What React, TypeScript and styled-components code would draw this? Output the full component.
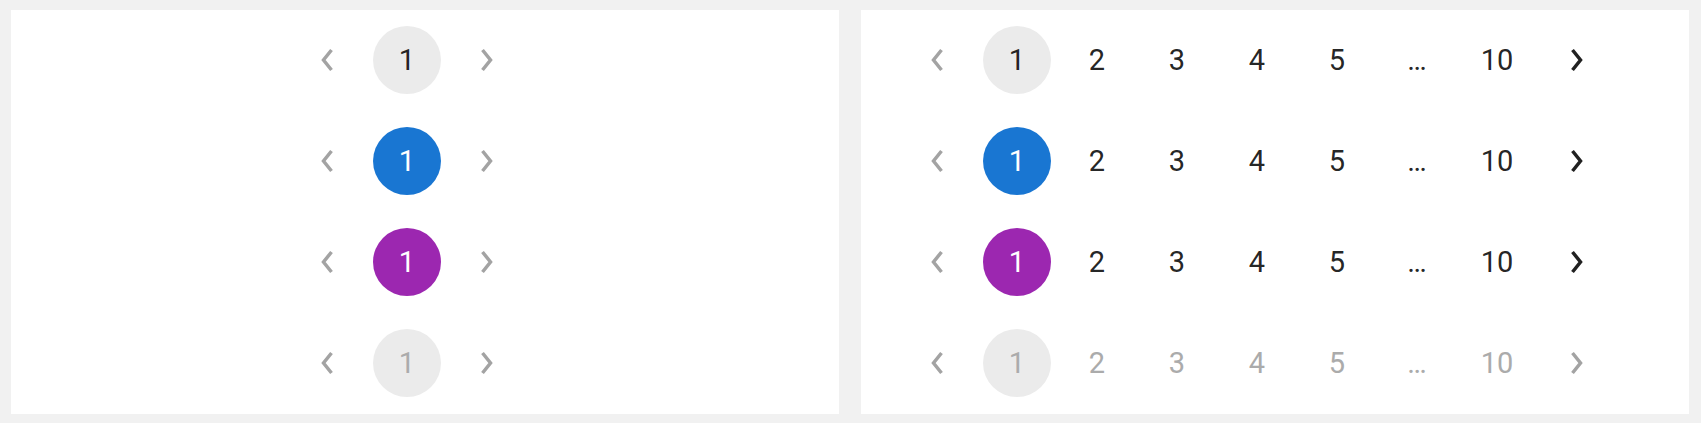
import React from 'react';
import styled, { createGlobalStyle, css } from 'styled-components';

const GlobalStyle = createGlobalStyle`
    html,
    body {
        margin: 0;
        padding: 0;
        background-color: #f1f1f1;
    }
    * {
        box-sizing: border-box;
    }
`;

const Page = styled.div`
    display: flex;
    gap: 22px;
    height: 423px;
    padding: 10px 12px 9px 11px;
    background-color: #f1f1f1;
    font-family: Roboto, 'Noto Sans', sans-serif;
`;

const Panel = styled.section`
    flex: 1;
    display: flex;
    flex-direction: column;
    align-items: center;
    gap: 33px;
    padding: 16px 36px 0 0;
    background-color: #fff;
`;

const Pager = styled.ul`
    display: flex;
    align-items: center;
    margin: 0;
    padding: 0;
    list-style: none;
`;

const Item = styled.li`
    display: flex;
    align-items: center;
    justify-content: center;
    width: 68px;
    height: 68px;
    margin: 0 6px;
`;

type Tone = 'standard' | 'primary' | 'secondary';

const selectedBg: Record<Tone, string> = {
    standard: '#ebebeb',
    primary: '#1976d2',
    secondary: '#9c27b0',
};

const PageButton = styled.button<{ $tone: Tone; $selected?: boolean; $disabled?: boolean }>`
    display: flex;
    align-items: center;
    justify-content: center;
    width: 68px;
    height: 68px;
    padding: 0;
    border: 0;
    border-radius: 50%;
    background: transparent;
    font-family: inherit;
    font-size: 29px;
    font-weight: 400;
    color: ${({ $disabled }) => ($disabled ? '#ababab' : 'rgba(0, 0, 0, 0.87)')};
    cursor: pointer;

    ${({ $selected, $tone, $disabled }) =>
        $selected
            ? css`
                  background-color: ${selectedBg[$tone]};
                  color: ${$disabled ? '#ababab' : $tone === 'standard' ? 'rgba(0, 0, 0, 0.87)' : '#fff'};
              `
            : ''}
`;

const Ellipsis = styled.span<{ $disabled?: boolean }>`
    font-size: 29px;
    color: ${({ $disabled }) => ($disabled ? '#ababab' : 'rgba(0, 0, 0, 0.87)')};
`;

const ArrowButton = styled.button<{ $disabled?: boolean }>`
    display: flex;
    align-items: center;
    justify-content: center;
    width: 68px;
    height: 68px;
    padding: 0;
    border: 0;
    background: transparent;
    color: ${({ $disabled }) => ($disabled ? '#a3a3a3' : '#212121')};
    cursor: pointer;
`;

function Chevron({ dir }: { dir: 'prev' | 'next' }) {
    const points = dir === 'next' ? '2.5,2 10.5,12 2.5,22' : '11.5,2 3.5,12 11.5,22';
    return (
        <svg width="14" height="24" viewBox="0 0 14 24">
            <polyline points={points} fill="none" stroke="currentColor" strokeWidth="3.5" />
        </svg>
    );
}

type rowType = {
    tone: Tone;
    disabled?: boolean;
};

const rows: rowType[] = [
    { tone: 'standard' },
    { tone: 'primary' },
    { tone: 'secondary' },
    { tone: 'standard', disabled: true },
];

const pages: (number | '…')[] = [1, 2, 3, 4, 5, '…', 10];

function Pagination({ tone, disabled, count }: rowType & { count: number }) {
    const items = count === 1 ? [1] : pages;
    return (
        <Pager>
            <Item>
                <ArrowButton $disabled>
                    <Chevron dir="prev" />
                </ArrowButton>
            </Item>
            {items.map((p, idx) => (
                <Item key={idx}>
                    {p === '…' ? (
                        <Ellipsis $disabled={disabled}>…</Ellipsis>
                    ) : (
                        <PageButton $tone={tone} $selected={p === 1} $disabled={disabled}>
                            {p}
                        </PageButton>
                    )}
                </Item>
            ))}
            <Item>
                <ArrowButton $disabled={disabled || count === 1}>
                    <Chevron dir="next" />
                </ArrowButton>
            </Item>
        </Pager>
    );
}

function App() {
    return (
        <>
            <GlobalStyle />
            <Page>
                <Panel>
                    {rows.map((row, idx) => (
                        <Pagination key={idx} {...row} count={1} />
                    ))}
                </Panel>
                <Panel>
                    {rows.map((row, idx) => (
                        <Pagination key={idx} {...row} count={10} />
                    ))}
                </Panel>
            </Page>
        </>
    );
}

export default App;
